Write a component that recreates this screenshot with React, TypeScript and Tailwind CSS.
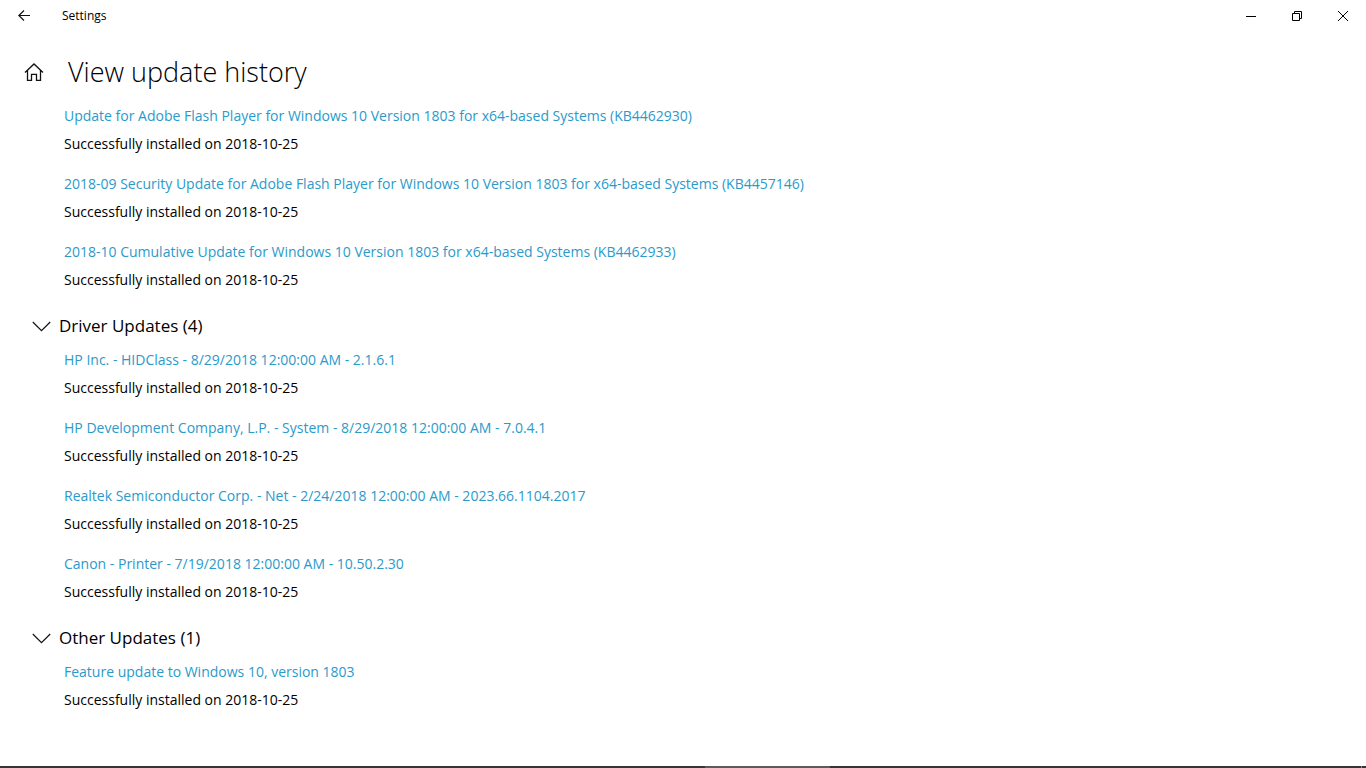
import React from "react";

interface Update {
    title: string;
    date: string;
}

interface UpdateGroup {
    name: string;
    updates: Update[];
}

const qualityUpdates: Update[] = [
    { title: "Update for Adobe Flash Player for Windows 10 Version 1803 for x64-based Systems (KB4462930)", date: "2018-10-25" },
    { title: "2018-09 Security Update for Adobe Flash Player for Windows 10 Version 1803 for x64-based Systems (KB4457146)", date: "2018-10-25" },
    { title: "2018-10 Cumulative Update for Windows 10 Version 1803 for x64-based Systems (KB4462933)", date: "2018-10-25" },
];

const groups: UpdateGroup[] = [
    {
        name: "Driver Updates",
        updates: [
            { title: "HP Inc. - HIDClass - 8/29/2018 12:00:00 AM - 2.1.6.1", date: "2018-10-25" },
            { title: "HP Development Company, L.P. - System - 8/29/2018 12:00:00 AM - 7.0.4.1", date: "2018-10-25" },
            { title: "Realtek Semiconductor Corp. - Net - 2/24/2018 12:00:00 AM - 2023.66.1104.2017", date: "2018-10-25" },
            { title: "Canon - Printer - 7/19/2018 12:00:00 AM - 10.50.2.30", date: "2018-10-25" },
        ],
    },
    {
        name: "Other Updates",
        updates: [{ title: "Feature update to Windows 10, version 1803", date: "2018-10-25" }],
    },
];

const TitleBar: React.FC = () => (
    <header className="flex h-8 items-center justify-between">
        <div className="flex h-full items-center">
            <button type="button" aria-label="Back" className="flex h-full w-12 items-center justify-center">
                <svg width="12" height="12" viewBox="0 0 12 12" fill="none" stroke="#111" strokeWidth="1.2">
                    <path d="M12 5.5H.8M6 .5l-5.2 5 5.2 5" />
                </svg>
            </button>
            <span className="ml-3.5 text-xs">Settings</span>
        </div>
        <div className="flex h-full">
            <button type="button" aria-label="Minimize" className="flex h-full w-[46px] items-center justify-center">
                <svg width="10" height="10" viewBox="0 0 10 10" shapeRendering="crispEdges">
                    <path d="M0 5h10v1H0z" fill="#000" />
                </svg>
            </button>
            <button type="button" aria-label="Restore" className="flex h-full w-[46px] items-center justify-center">
                <svg width="10" height="10" viewBox="0 0 10 10" fill="none" stroke="#000">
                    <path d="M.5 2.5h7v7h-7zM2.5 2.5v-2h7v7h-2" />
                </svg>
            </button>
            <button type="button" aria-label="Close" className="flex h-full w-[46px] items-center justify-center">
                <svg width="10" height="10" viewBox="0 0 10 10" fill="none" stroke="#000">
                    <path d="M0 0l10 10M10 0L0 10" />
                </svg>
            </button>
        </div>
    </header>
);

const UpdateList: React.FC<{ updates: Update[] }> = ({ updates }) => (
    <ul className="flex flex-col gap-3 pl-16 text-sm leading-7">
        {updates.map(update => (
            <li key={update.title}>
                <a href="#" className="block w-fit text-[#2a9acb]">{update.title}</a>
                <p>Successfully installed on {update.date}</p>
            </li>
        ))}
    </ul>
);

const App: React.FC = () => {
    return (
        <div className="flex min-h-screen flex-col bg-white font-['Open_Sans','Noto_Sans',sans-serif] text-black">
            <TitleBar />
            <main className="flex-1">
                <div className="flex items-center pt-5 pb-2.5">
                    <button type="button" aria-label="Home" className="ml-6 flex h-10 w-5 items-center justify-center">
                        <svg width="20" height="18" viewBox="0 0 20 18" fill="none" stroke="#111" strokeWidth="1.3">
                            <path d="M1 9.5L10 1l9 8.5M3.5 7.5v9.8h4v-6h5v6h4V7.5" />
                        </svg>
                    </button>
                    <h1 className="ml-6 text-[27px] leading-10 font-light">View update history</h1>
                </div>
                <UpdateList updates={qualityUpdates} />
                {groups.map(group => (
                    <section key={group.name} className="pt-3">
                        <h2>
                            <button type="button" aria-expanded="true" className="ml-8 flex h-10 items-center gap-2 text-[17px]">
                                <svg width="19" height="11" viewBox="0 0 19 11" fill="none" stroke="#111" strokeWidth="1.2">
                                    <path d="M.8 1l8.7 8.7L18.2 1" />
                                </svg>
                                {group.name} ({group.updates.length})
                            </button>
                        </h2>
                        <UpdateList updates={group.updates} />
                    </section>
                ))}
            </main>
            {/* top edge of the taskbar */}
            <footer className="flex h-0.5 bg-[#343538]">
                <div className="w-[705px]" />
                <div className="w-[125px] bg-[#5a5b5d]" />
                <div className="mr-1 ml-auto w-px bg-[#85868a]" />
            </footer>
        </div>
    );
};

export default App;
